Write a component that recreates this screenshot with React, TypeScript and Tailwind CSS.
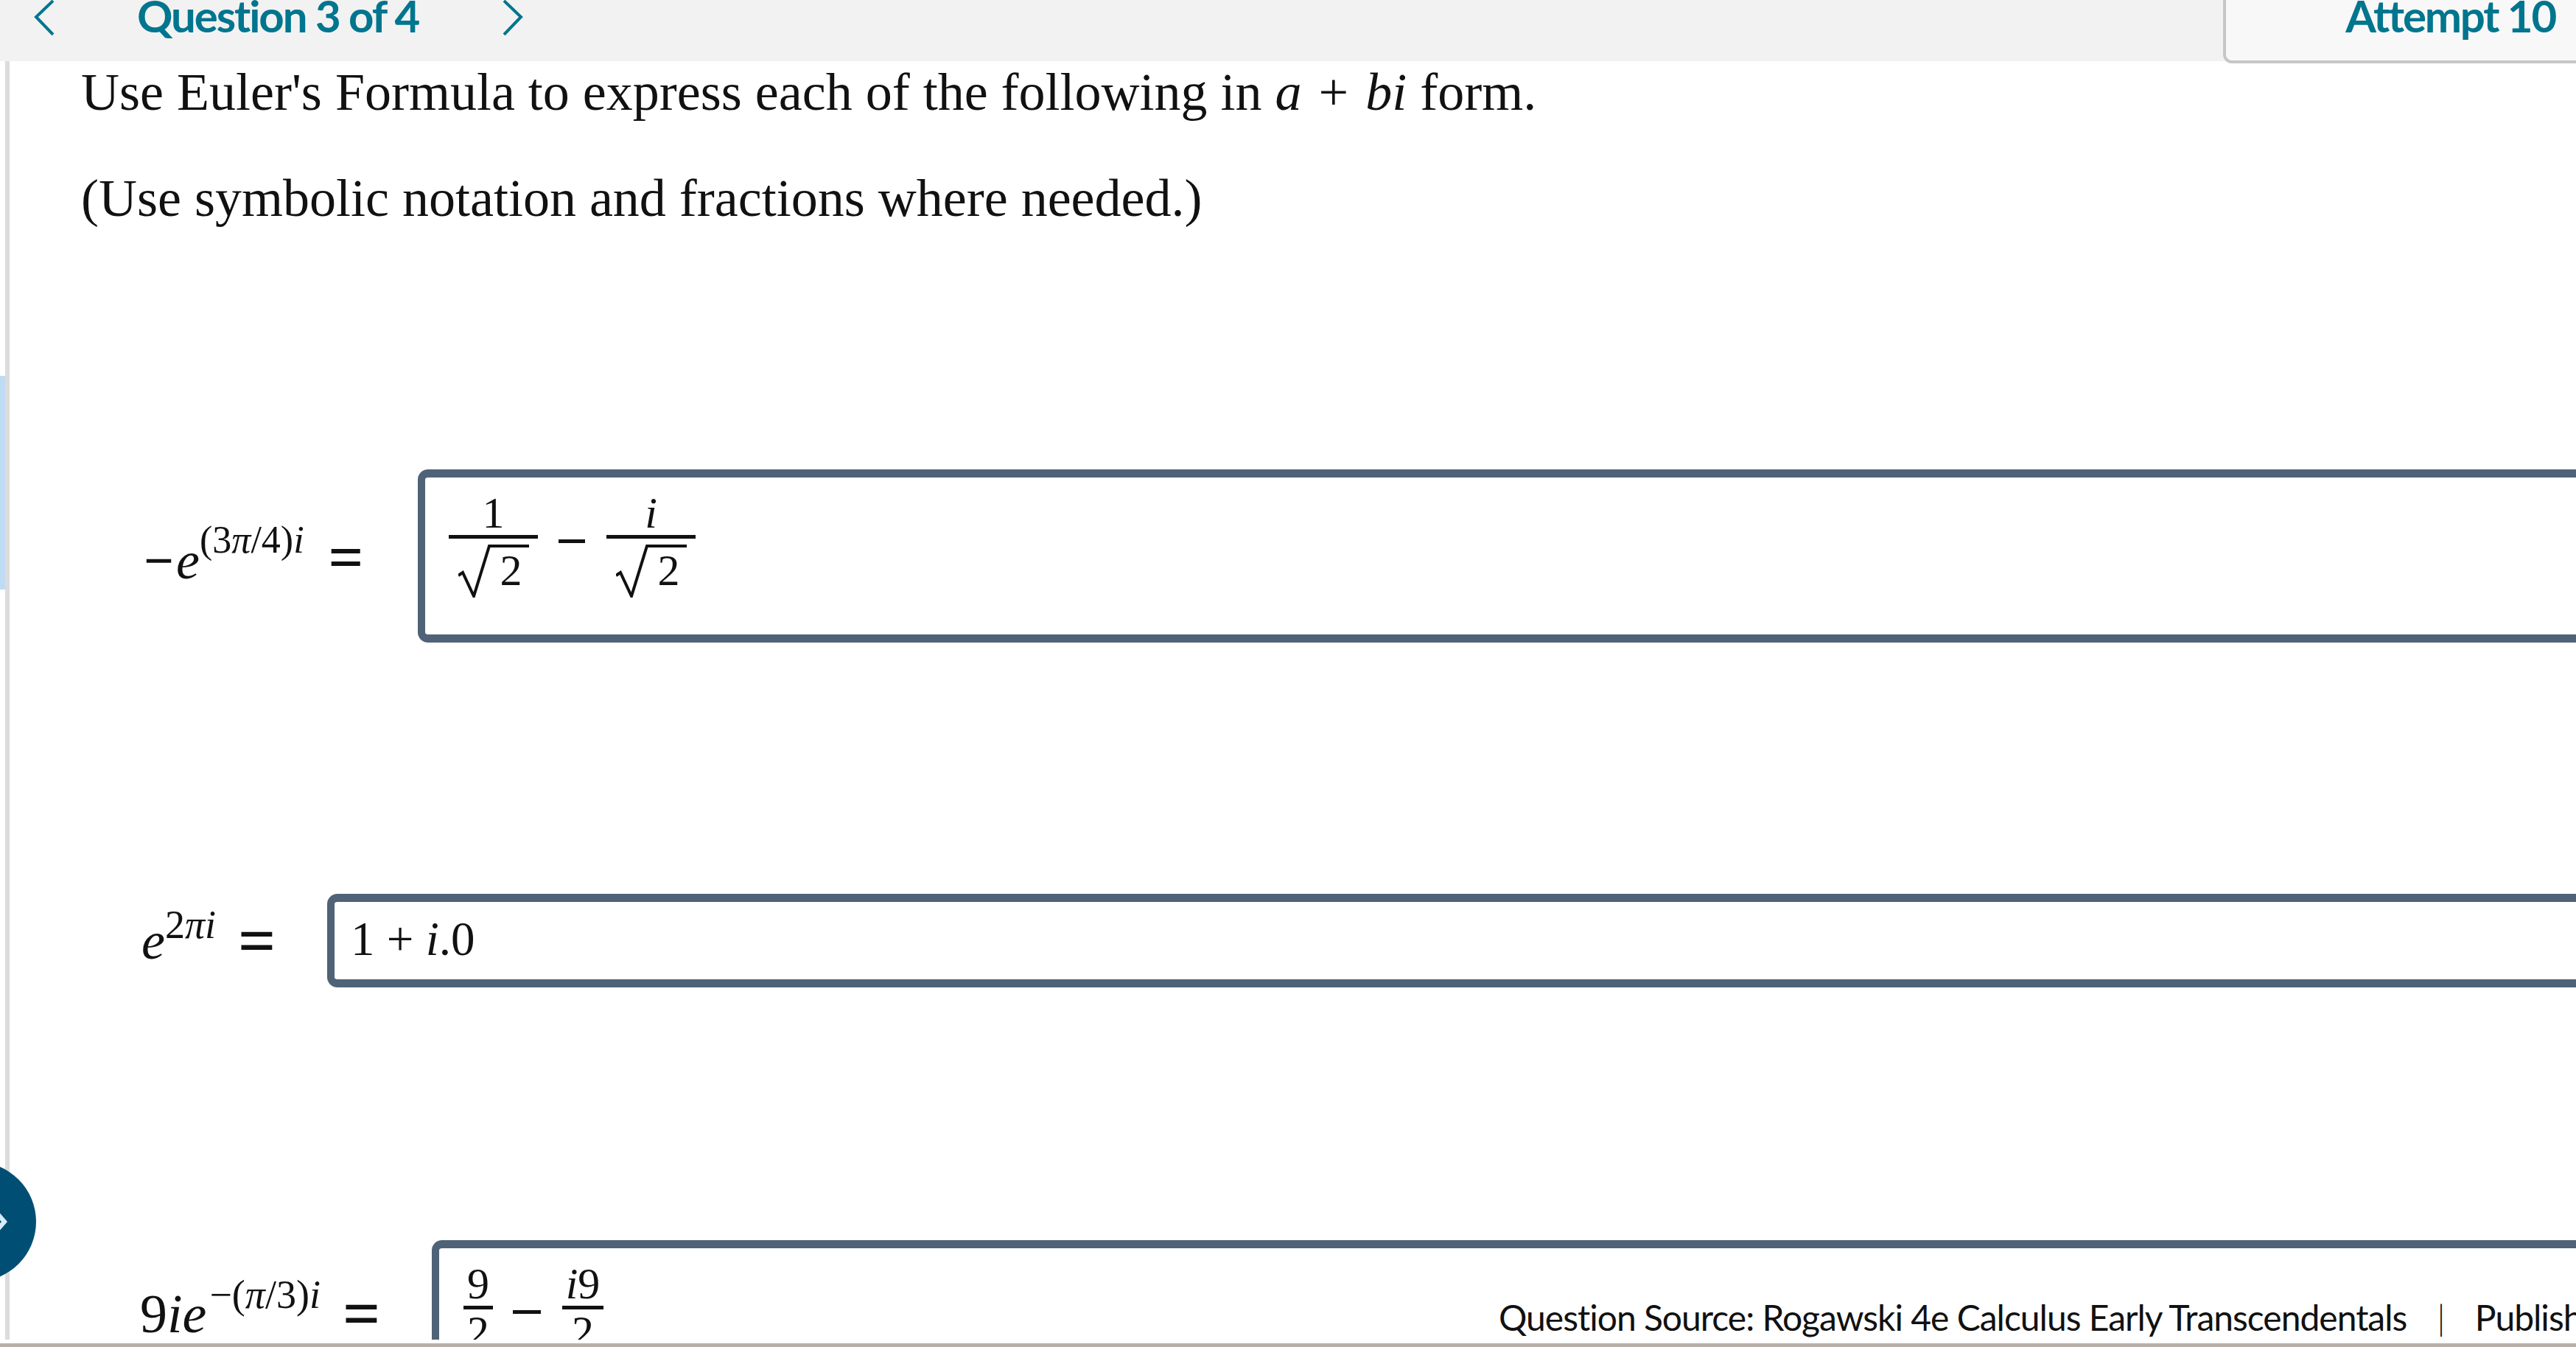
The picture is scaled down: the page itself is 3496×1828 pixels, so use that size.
function Frac({ top, bottom, width }: { top: React.ReactNode; bottom: React.ReactNode; width: string }) {
  return (
    <span className={`inline-flex flex-col items-center ${width}`}>
      <span className="flex h-[78px] items-end leading-[60px]">{top}</span>
      <span className="h-[5px] w-full bg-[#111]" />
      <span className="flex items-start leading-[60px]">{bottom}</span>
    </span>
  );
}

function Sqrt2() {
  return (
    <span className="relative mt-[8px] flex h-[72px] w-[96px] justify-end pr-[9px]">
      <svg className="absolute left-0 top-0" width="96" height="72" viewBox="0 0 96 72" fill="none">
        <path d="M0 42 L6 38 L21 70 L42 2 H96" stroke="#111" strokeWidth="4" />
      </svg>
      <span className="pt-[8px] text-[60px] leading-[54px]">2</span>
    </span>
  );
}

function Chevron({ dir }: { dir: "left" | "right" }) {
  return (
    <svg width="28" height="48" viewBox="0 0 28 48" fill="none" className="shrink-0">
      <path d={dir === "left" ? "M26 1 L3 23 L26 47" : "M2 1 L25 23 L2 47"} stroke="#00758e" strokeWidth="4" />
    </svg>
  );
}

function AnswerBox({ className, children }: { className: string; children: React.ReactNode }) {
  return (
    <div className={`flex-1 rounded-l-[14px] border-y-[11px] border-l-[10px] border-r-0 border-[#4f6277] bg-white ${className}`}>
      {children}
    </div>
  );
}

export default function App() {
  return (
    <div className="relative h-[1828px] w-[3496px] overflow-hidden bg-white font-['Liberation_Serif',serif] text-[#111]">
      <header className="flex h-[83px] items-start justify-between bg-[#f2f2f2] font-['Lato',sans-serif] text-[#00758e]">
        <div className="flex items-start pl-[46px]">
          <Chevron dir="left" />
          <span className="ml-[112px] -mt-[19px] text-[60px] font-bold leading-[80px] tracking-[-2.1px]">Question 3 of 4</span>
          <span className="ml-[114px]">
            <Chevron dir="right" />
          </span>
        </div>
        <div className="flex h-[86px] w-[479px] justify-end rounded-bl-[12px] border-b-[4px] border-l-[4px] border-[#c6c6c6] bg-[#f8f8f8] pr-[28px]">
          <span className="-mt-[19px] text-[60px] font-bold leading-[80px] tracking-[-2.2px]">Attempt 10</span>
        </div>
      </header>

      <div className="flex h-[1735px]">
        <div className="flex w-[13px] shrink-0">
          <div className="mt-[427px] h-[290px] w-[7px] bg-[#bfdcf5]" />
          <div className="w-[6px] bg-[#dcdcdc]" />
        </div>

        <main className="min-w-0 flex-1 pl-[97px]">
          <p className="pt-[2px] text-[72px] leading-[80px]">
            Use Euler's Formula to express each of the following in <em>a</em>
            <span className="mx-[5px]"> + </span>
            <em>bi</em> form.
          </p>
          <p className="mt-[64px] text-[72px] leading-[80px]">(Use symbolic notation and fractions where needed.)</p>

          <div className="mt-[328px] flex h-[235px] items-start">
            <div className="flex w-[457px] shrink-0 pl-[85px] pt-[84px] text-[72px] leading-[80px]">
              <span className="font-bold">−</span>
              <em className="ml-[3px]">e</em>
              <span className="-mt-[18px] text-[52px] leading-[60px]">
                (3<em>π</em>/4)<em>i</em>
              </span>
              <span className="ml-[33px] -mt-[4px] text-[84px] font-bold">=</span>
            </div>
            <AnswerBox className="h-[235px]">
              <div className="flex items-start pl-[32px] text-[60px]">
                <Frac top="1" bottom={<Sqrt2 />} width="w-[121px]" />
                <span className="ml-[28px] mt-[84px] h-[5px] w-[36px] bg-[#111]" />
                <Frac top={<em>i</em>} bottom={<Sqrt2 />} width="ml-[29px] w-[121px]" />
              </div>
            </AnswerBox>
          </div>

          <div className="mt-[341px] flex h-[127px] items-start">
            <div className="flex w-[334px] shrink-0 pl-[82px] pt-[24px] text-[72px] leading-[80px]">
              <em>e</em>
              <span className="-mt-[12px] text-[54px] leading-[60px]">
                2<em>π</em>
                <em>i</em>
              </span>
              <span className="ml-[30px] text-[90px] font-bold">=</span>
            </div>
            <AnswerBox className="h-[127px]">
              <div className="pl-[22px] pt-[10px] text-[65px] leading-[80px]">
                1 + <em>i</em>.0
              </div>
            </AnswerBox>
          </div>

          <div className="mt-[343px] flex h-[200px] items-start">
            <div className="flex w-[476px] shrink-0 pl-[80px] pt-[60px] text-[74px] leading-[80px]">
              <span>9</span>
              <em>ie</em>
              <span className="ml-[4px] -mt-[16px] text-[54px] leading-[60px]">
                −(<em>π</em>/3)<em>i</em>
              </span>
              <span className="ml-[30px] text-[90px] font-bold">=</span>
            </div>
            <AnswerBox className="h-[200px] rounded-bl-none border-b-0">
              <div className="flex items-start pl-[33px] text-[60px]">
                <Frac top="9" bottom="2" width="w-[40px]" />
                <span className="ml-[27px] mt-[84px] h-[5px] w-[38px] bg-[#111]" />
                <Frac top={<span><em>i</em>9</span>} bottom="2" width="ml-[29px] w-[56px]" />
              </div>
            </AnswerBox>
          </div>
        </main>
      </div>

      <div className="absolute bottom-0 left-0 right-0 h-[10px] border-b-[5px] border-[#b8b0a6] bg-white" />
      <div className="pointer-events-none absolute bottom-0 left-0 right-0 h-[70px] whitespace-nowrap pl-[2034px] font-['Lato',sans-serif] text-[48px] leading-[60px] tracking-[-1px] text-[#111]">
        Question Source: Rogawski 4e Calculus Early Transcendentals
        <span className="mx-[41px] font-light">|</span>
        Publisher
      </div>

      <div className="absolute left-[-113px] top-[1577px] flex h-[162px] w-[162px] items-center justify-end rounded-full bg-[#004e74] pr-[39px]">
        <svg width="20" height="40" viewBox="0 0 20 40" fill="none">
          <path d="M2 4 L16 20 L2 36" stroke="#d7ecf8" strokeWidth="6" />
        </svg>
      </div>
    </div>
  );
}
